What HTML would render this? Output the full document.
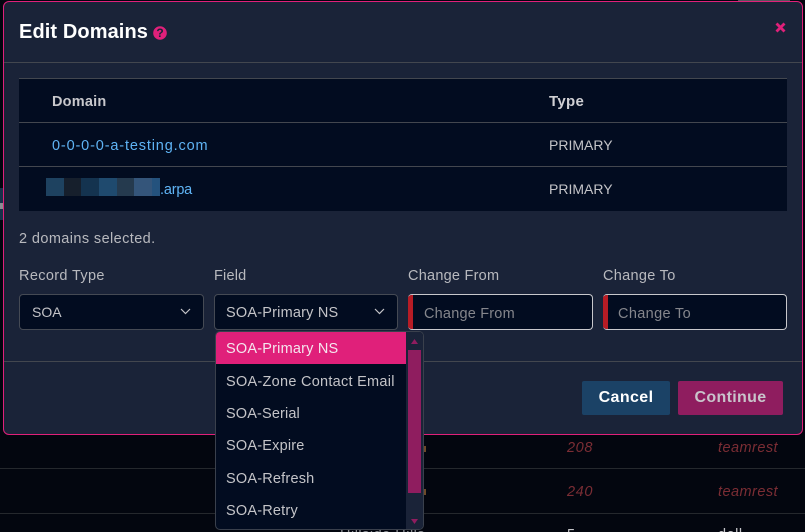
<!DOCTYPE html>
<html>
<head>
<meta charset="utf-8">
<style>
*{box-sizing:border-box;margin:0;padding:0}
html,body{width:805px;height:532px;overflow:hidden;background:#03060f;font-family:"Liberation Sans",sans-serif;font-size:14.5px;color:#c4c4c8}
#root{position:relative;width:805px;height:532px;overflow:hidden;contain:strict}
.a{position:absolute;white-space:nowrap}
.line{position:absolute;height:1px}
.t{line-height:20px}
.s{font-size:14px;line-height:18px}
.select,.input{position:absolute;top:294px;height:36px;background:#020c20;border-radius:4px}
.select{border:1px solid #454a54}
.input{border:1px solid #c8c8cc;border-left:0;overflow:hidden}
.input i{position:absolute;left:0;top:0;bottom:0;width:5px;background:#b71c25}
.opt{position:absolute;width:190px;height:32px;padding-left:10px;line-height:34px;color:#c4c4c8;overflow:hidden}
</style>
</head>
<body>
<div id="root">
<div style="position:absolute;inset:0;background:#03060f"></div>
<div class="line" style="left:0;width:805px;top:468px;background:#25282d"></div>
<div class="line" style="left:0;width:805px;top:513px;background:#25282d"></div>
<div class="a" style="left:0;top:188px;width:3px;height:32px;background:#17324a"></div>
<div class="a" style="left:0;top:203px;width:3px;height:6px;background:#8a8d92"></div>
<div class="a" style="left:738px;top:0;width:52px;height:1px;background:#55575c"></div>
<div class="a" style="left:424px;top:446px;width:2px;height:6px;background:#6e4a2a"></div>
<div class="a" style="left:424px;top:489px;width:2px;height:6px;background:#6e4a2a"></div>
<div class="a t" style="left:567px;top:438px;color:#7b2d34;font-style:italic;letter-spacing:.6px">208</div>
<div class="a t" style="left:718px;top:438px;color:#7b2d34;font-style:italic;letter-spacing:.45px">teamrest</div>
<div class="a t" style="left:567px;top:482px;color:#7b2d34;font-style:italic;letter-spacing:.6px">240</div>
<div class="a t" style="left:718px;top:482px;color:#7b2d34;font-style:italic;letter-spacing:.45px">teamrest</div>
<div class="a t" style="left:567px;top:525px;color:#c4c4c8">5</div>
<div class="a t" style="left:718px;top:525px;color:#c4c4c8;letter-spacing:.5px">dell</div>
<div class="a t" style="left:340px;top:525px;color:#8a8d92;letter-spacing:.5px">Hillside Hills</div>

<div style="position:absolute;left:3px;top:1px;width:800px;height:434px;background:#1a2338;border:1px solid #e0207a;border-radius:6px"></div>
<div class="a" style="left:19px;top:19px;font-size:20px;line-height:26px;font-weight:700;color:#fff;letter-spacing:.1px">Edit Domains</div>
<svg class="a" style="left:153px;top:26px" width="14" height="14" viewBox="0 0 14 14"><circle cx="7" cy="7" r="6.800" fill="#e0207a"/><text x="7" y="11.200" text-anchor="middle" font-family="Liberation Sans" font-weight="700" font-size="12" fill="#1a2338">?</text></svg>
<svg class="a" style="left:775px;top:22px" width="11" height="11" viewBox="0 0 11 11"><path d="M1.500 1.500L9.500 9.500M9.500 1.500L1.500 9.500" stroke="#e0207a" stroke-width="2.800"/></svg>
<div class="line" style="left:4px;width:798px;top:62px;background:#43474f"></div>

<div style="position:absolute;left:19px;top:78px;width:768px;height:133px;background:#020c20"></div>
<div class="line" style="left:19px;width:768px;top:78px;background:#43474f"></div>
<div class="line" style="left:19px;width:768px;top:122px;background:#43474f"></div>
<div class="line" style="left:19px;width:768px;top:166px;background:#43474f"></div>
<div class="a t" style="left:52px;top:92px;font-weight:700;color:#c8c8cc;letter-spacing:.2px">Domain</div>
<div class="a t" style="left:549px;top:92px;font-weight:700;color:#d0d0d4;font-size:15px;letter-spacing:.3px">Type</div>
<div class="a t" style="left:52px;top:136px;color:#5fb4f5;letter-spacing:.85px">0-0-0-0-a-testing.com</div>
<div class="a s" style="left:549px;top:136px;color:#c4c4c8">PRIMARY</div>
<div class="a" style="left:46px;top:178px;width:114px;height:18px;background:linear-gradient(90deg,#1e4260 0 18px,#161f2c 18px 35px,#14334f 35px 53px,#1f4a6e 53px 71px,#253a4e 71px 88px,#34557a 88px 106px,#24527d 106px)"></div>
<div class="a t" style="left:160px;top:180px;color:#5fb4f5;letter-spacing:-.2px">.arpa</div>
<div class="a s" style="left:549px;top:180px;color:#c4c4c8">PRIMARY</div>

<div class="a t" style="left:19px;top:229px;color:#b8b9be;letter-spacing:.4px">2 domains selected.</div>
<div class="a t" style="left:19px;top:266px;color:#b8b9be;letter-spacing:.35px">Record Type</div>
<div class="a t" style="left:214px;top:266px;color:#b8b9be;letter-spacing:.2px">Field</div>
<div class="a t" style="left:408px;top:266px;color:#b8b9be;letter-spacing:.24px">Change From</div>
<div class="a t" style="left:603px;top:266px;color:#b8b9be;letter-spacing:.3px">Change To</div>

<div class="select" style="left:19px;width:185px"></div>
<div class="a s" style="left:32px;top:303px">SOA</div>
<svg class="a" style="left:180px;top:308px" width="11" height="7" viewBox="0 0 11 7"><path d="M1 1L5.500 5.500L10 1" fill="none" stroke="#c4c4c8" stroke-width="1.200"/></svg>
<div class="select" style="left:214px;width:184px"></div>
<div class="a t" style="left:226px;top:303px;letter-spacing:.2px">SOA-Primary NS</div>
<svg class="a" style="left:374px;top:308px" width="11" height="7" viewBox="0 0 11 7"><path d="M1 1L5.500 5.500L10 1" fill="none" stroke="#c4c4c8" stroke-width="1.200"/></svg>

<div class="input" style="left:408px;width:185px"><i></i></div>
<div class="a t" style="left:424px;top:304px;color:#85868c;letter-spacing:.2px">Change From</div>
<div class="input" style="left:603px;width:184px"><i></i></div>
<div class="a t" style="left:618px;top:304px;color:#85868c;letter-spacing:.35px">Change To</div>

<div class="line" style="left:4px;width:798px;top:361px;background:#43474f"></div>
<div class="a" style="left:582px;top:381px;width:88px;height:34px;background:#1b4266;border-radius:2px;color:#fff;font-weight:700;font-size:16px;line-height:33px;text-align:center;letter-spacing:.4px">Cancel</div>
<div class="a" style="left:678px;top:381px;width:105px;height:34px;background:#8f1d5f;border-radius:2px;color:#c9c4cb;font-weight:700;font-size:16px;line-height:33px;text-align:center;letter-spacing:.35px">Continue</div>

<div style="position:absolute;left:215px;top:331px;width:209px;height:199px;background:#020c20;border:1px solid #3a404c;border-radius:5px;overflow:hidden">
  <div class="opt" style="left:0;top:0;background:#e0207a;color:#f4e6ee;letter-spacing:.2px">SOA-Primary NS</div>
  <div class="opt" style="left:0;top:33px;letter-spacing:.27px">SOA-Zone Contact Email</div>
  <div class="opt" style="left:0;top:65px;letter-spacing:.14px">SOA-Serial</div>
  <div class="opt" style="left:0;top:97px;letter-spacing:.2px">SOA-Expire</div>
  <div class="opt" style="left:0;top:130px;letter-spacing:.2px">SOA-Refresh</div>
  <div class="opt" style="left:0;top:162px;letter-spacing:.2px">SOA-Retry</div>
  <div style="position:absolute;left:190px;top:0;width:17px;height:197px;background:#1a2338">
    <div style="position:absolute;left:2px;top:18px;width:13px;height:143px;background:#8f1d5f"></div>
    <svg style="position:absolute;left:4px;top:7px" width="9" height="5" viewBox="0 0 9 5"><path d="M4.500 0L8 5H1z" fill="#8f1d5f"/></svg>
    <svg style="position:absolute;left:4px;top:187px" width="9" height="5" viewBox="0 0 9 5"><path d="M1 0H8L4.500 5z" fill="#8f1d5f"/></svg>
  </div>
</div>
</div>
</body>
</html>
